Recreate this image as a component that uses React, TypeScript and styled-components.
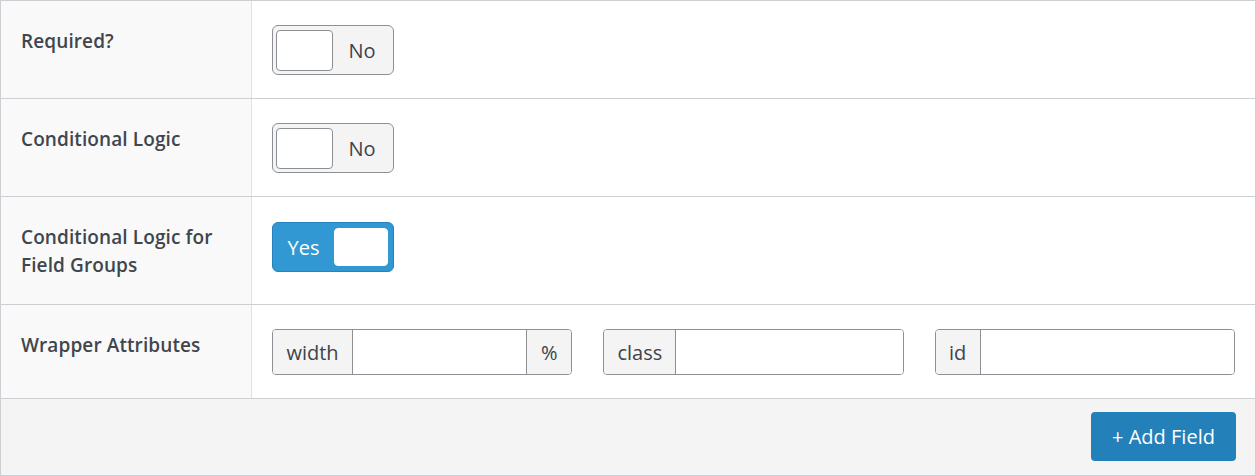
import React from "react";
import styled, { createGlobalStyle } from "styled-components";

const Global = createGlobalStyle`
  html, body { margin: 0; padding: 0; background: #fff; }
  body { font-family: "Open Sans", "Noto Sans", sans-serif; color: #3c434a; }
  * { box-sizing: border-box; }
`;

const Panel = styled.div`
  width: 1256px;
  height: 476px;
  border: 1px solid #ccd0d4;
  display: flex;
  flex-direction: column;
`;

const Row = styled.div`
  display: grid;
  grid-template-columns: 251px 1fr;
  border-bottom: 1px solid #ccd0d4;
`;

const Label = styled.div`
  background: #f9f9f9;
  border-right: 1px solid #e1e1e1;
  padding: 26px 20px 25px;
  font-size: 19px;
  line-height: 28px;
  font-weight: 600;
  color: #40464d;
  letter-spacing: 0.1px;
`;

const Value = styled.div<{ $top?: number }>`
  padding: ${(p) => p.$top ?? 24}px 20px 23px;
  display: flex;
  align-items: flex-start;
`;

const Toggle = styled.div<{ $on?: boolean }>`
  width: 122px;
  height: 50px;
  border-radius: 6px;
  border: 1px solid ${(p) => (p.$on ? "#2582bd" : "#8c8f94")};
  background: ${(p) => (p.$on ? "#3298d3" : "#f4f4f4")};
  display: flex;
  align-items: center;
  padding: 0 5px 0 3px;
  font-size: 20px;
  color: ${(p) => (p.$on ? "#fff" : "#3c434a")};
`;

const Knob = styled.div<{ $on?: boolean }>`
  width: ${(p) => (p.$on ? 54 : 57)}px;
  height: ${(p) => (p.$on ? 38 : 41)}px;
  background: #fff;
  border: 1px solid ${(p) => (p.$on ? "#fff" : "#8c8f94")};
  border-radius: 4px;
`;

const ToggleText = styled.span<{ $on?: boolean }>`
  flex: 1;
  text-align: center;
  padding-left: ${(p) => (p.$on ? 0 : 3)}px;
  padding-right: ${(p) => (p.$on ? 3 : 0)}px;
`;

const Attrs = styled.div`
  flex: 1;
  display: grid;
  grid-template-columns: repeat(3, 1fr);
  gap: 31px;
`;

const Group = styled.div`
  display: flex;
  height: 46px;
  border: 1px solid #8c8f94;
  border-radius: 4px;
  overflow: hidden;
  font-size: 20px;
`;

const Addon = styled.span<{ $w: number; $side?: "left" | "right" }>`
  width: ${(p) => p.$w}px;
  flex: none;
  background: #f4f4f4;
  display: flex;
  align-items: center;
  justify-content: center;
  color: #3c434a;
  ${(p) => (p.$side === "right" ? "border-left: 1px solid #8c8f94;" : "border-right: 1px solid #8c8f94;")}
`;

const Input = styled.input`
  flex: 1;
  min-width: 0;
  border: none;
  outline: none;
  background: #fff;
  font: inherit;
`;

const Footer = styled.div`
  flex: 1;
  background: #f4f4f4;
  display: flex;
  justify-content: flex-end;
  align-items: flex-start;
  padding: 13px 19px 0 0;
`;

const Button = styled.button`
  width: 145px;
  height: 49px;
  border: none;
  border-radius: 4px;
  background: #2380b8;
  color: #fff;
  font-family: "Open Sans", "Noto Sans", sans-serif;
  font-size: 20px;
  cursor: pointer;
`;

export default function App() {
  return (
    <>
      <Global />
      <Panel>
        <Row>
          <Label>Required?</Label>
          <Value>
            <Toggle>
              <Knob />
              <ToggleText>No</ToggleText>
            </Toggle>
          </Value>
        </Row>
        <Row>
          <Label>Conditional Logic</Label>
          <Value>
            <Toggle>
              <Knob />
              <ToggleText>No</ToggleText>
            </Toggle>
          </Value>
        </Row>
        <Row>
          <Label>
            Conditional Logic for
            <br />
            Field Groups
          </Label>
          <Value $top={25}>
            <Toggle $on>
              <ToggleText $on>Yes</ToggleText>
              <Knob $on />
            </Toggle>
          </Value>
        </Row>
        <Row>
          <Label>Wrapper Attributes</Label>
          <Value>
            <Attrs>
              <Group>
                <Addon $w={80}>width</Addon>
                <Input />
                <Addon $w={45} $side="right">%</Addon>
              </Group>
              <Group>
                <Addon $w={72}>class</Addon>
                <Input />
              </Group>
              <Group>
                <Addon $w={45}>id</Addon>
                <Input />
              </Group>
            </Attrs>
          </Value>
        </Row>
        <Footer>
          <Button>+ Add Field</Button>
        </Footer>
      </Panel>
    </>
  );
}
